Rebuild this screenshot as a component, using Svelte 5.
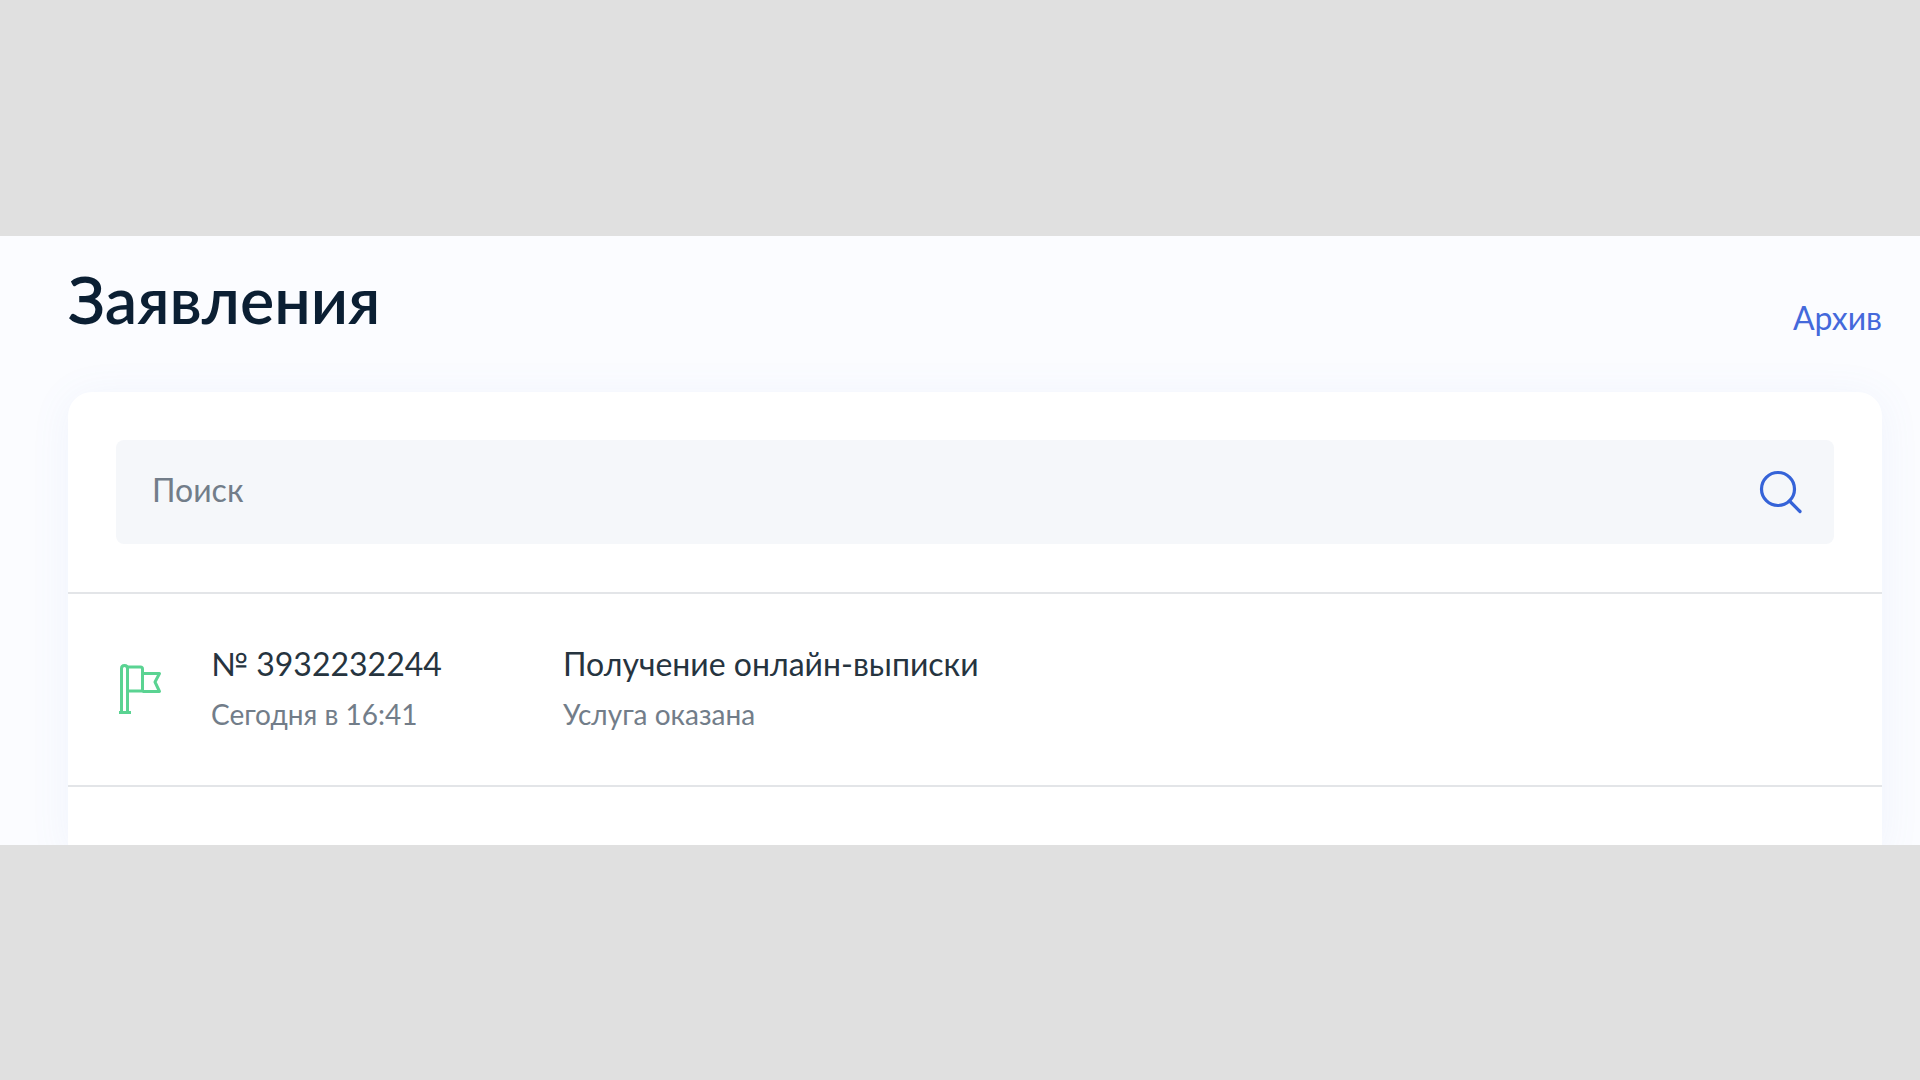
<script lang="ts">
	const orders = [
		{ num: '№ 3932232244', date: 'Сегодня в 16:41', title: 'Получение онлайн-выписки', status: 'Услуга оказана' }
	];
</script>

<div class="stage">
	<main class="page">
		<header class="head">
			<h1>Заявления</h1>
			<a href="#archive">Архив</a>
		</header>
		<section class="card">
			<div class="search-wrap">
				<div class="search">
					<span>Поиск</span>
					<svg width="44" height="44" viewBox="0 0 44 44" fill="none" stroke="#3563d8" stroke-width="3.2" stroke-linecap="round">
						<circle cx="19" cy="19" r="16.500" />
						<path d="M30.500 31l10.500 10.500" />
					</svg>
				</div>
			</div>
			{#each orders as o}
				<div class="row">
					<svg class="flag" width="44" height="50" viewBox="0 0 44 50" fill="none" stroke="#5ad392" stroke-width="3" stroke-linejoin="round">
						<path d="M0 48.500h12M2.500 48.500V4.500c0-4 6-4 6 0v44" />
						<path d="M8.500 3h13c1.500 0 2 1 2 2v22h-15" />
						<path d="M23.500 9.500h17l-4.500 8.500 4.500 9.500h-17" />
					</svg>
					<div class="col num">
						<div class="main">{o.num}</div>
						<div class="sub">{o.date}</div>
					</div>
					<div class="col">
						<div class="main">{o.title}</div>
						<div class="sub">{o.status}</div>
					</div>
				</div>
			{/each}
		</section>
	</main>
</div>

<style>
:global(body) {
	margin: 0;
	background: #e0e0e0;
}
.stage {
	height: 1080px;
	display: flex;
	flex-direction: column;
	justify-content: center;
	font-family: Lato, "Noto Sans", sans-serif;
}
.page {
	height: 609px;
	overflow: hidden;
	background: #fbfcff;
	padding: 0 38px 0 68px;
}
.head {
	height: 156px;
	display: flex;
	justify-content: space-between;
	align-items: flex-start;
}
h1 {
	margin: 28px 0 0;
	font-size: 64.5px;
	line-height: 70px;
	font-weight: 600;
	color: #0b1f33;
}
a {
	margin-top: 62px;
	font-size: 32px;
	line-height: 40px;
	color: #4469db;
	text-decoration: none;
}
.card {
	background: #fff;
	border-radius: 24px 24px 0 0;
	box-shadow: 0 4px 40px rgba(100, 140, 220, 0.08);
	min-height: 460px;
}
.search-wrap {
	padding: 48px 48px 48px;
	border-bottom: 2px solid #e3e5e8;
}
.search {
	height: 104px;
	background: #f5f7fa;
	border-radius: 8px;
	padding: 0 31px 0 36px;
	display: flex;
	align-items: center;
	justify-content: space-between;
	font-size: 32px;
	color: #727d89;
}
.search span {
	margin-top: -4px;
}
.row {
	height: 191px;
	padding-left: 51px;
	display: flex;
	align-items: center;
	border-bottom: 2px solid #e3e5e8;
}
.flag {
	margin-right: 48px;
}
.col {
	display: flex;
	flex-direction: column;
	gap: 10px;
}
.num {
	width: 352px;
}
.main {
	font-size: 32px;
	line-height: 41px;
	color: #26343f;
}
.sub {
	font-size: 28px;
	line-height: 41px;
	color: #727d89;
}
</style>
